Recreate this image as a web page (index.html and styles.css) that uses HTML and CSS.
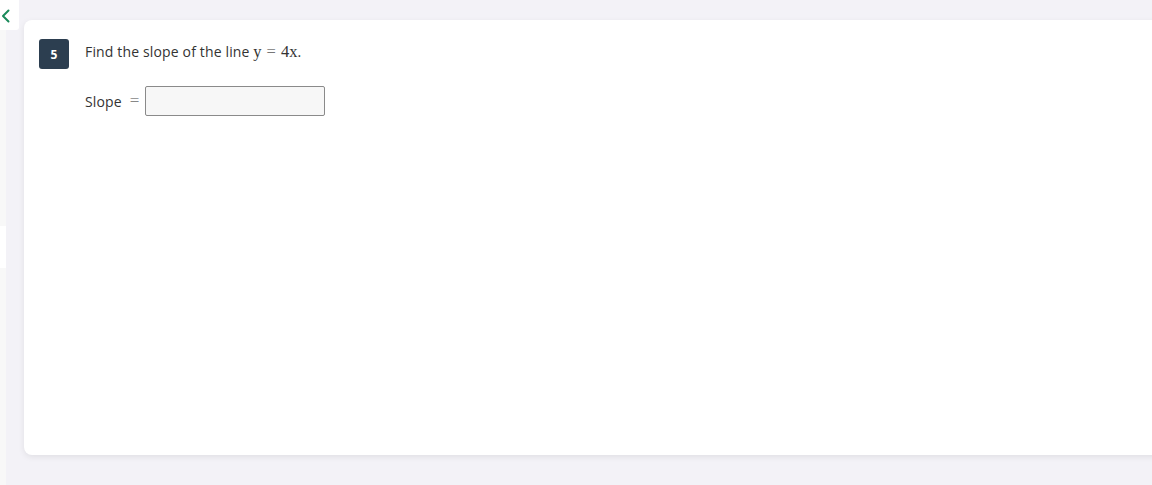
FILE: index.html
```html
<!DOCTYPE html>
<html lang="en">
<head>
    <meta charset="UTF-8">
    <meta name="viewport" content="width=device-width, initial-scale=1.0">
    <title>Question 5</title>
    <link rel="stylesheet" href="styles.css">
</head>
<body>
    <a class="back" href="#" aria-label="Back">
        <svg width="10" height="14" viewBox="0 0 10 14">
            <path d="M7.5 1.5 L2 7 L7.5 12.5" fill="none" stroke="#1a8a5a" stroke-width="2" stroke-linecap="round" stroke-linejoin="round"/>
        </svg>
    </a>
    <div class="layout">
        <aside class="side">
            <div class="side-block"></div>
        </aside>
        <main class="main">
            <div class="card">
                <div class="question">
                    <div class="badge">5</div>
                    <div class="body">
                        <p class="prompt">Find the slope of the line <span class="math">y<span class="op">=</span>4x</span>.</p>
                        <div class="answer">
                            <label for="slope">Slope</label>
                            <span class="eq">=</span>
                            <input type="text" id="slope">
                        </div>
                    </div>
                </div>
            </div>
        </main>
    </div>
</body>
</html>
```

FILE: styles.css
```css
/* Page */
html, body {
    margin: 0;
    padding: 0;
    height: 100%;
    overflow: hidden;
}

body {
    font-family: "Open Sans", "Noto Sans", sans-serif;
    background-color: #f3f2f7;
    color: #333;
}

.back {
    position: absolute;
    top: 0;
    left: 0;
    width: 19px;
    height: 30px;
    background-color: #fff;
    border-bottom-right-radius: 3px;
    display: flex;
    align-items: center;
    justify-content: flex-start;
    padding-left: 1px;
    padding-top: 2px;
    box-sizing: border-box;
}

.layout {
    display: flex;
    height: 100%;
}

.side {
    width: 6px;
    flex-shrink: 0;
    background-color: #f8f8f8;
    padding-top: 226px;
}

.side-block {
    height: 42px;
    background-color: #fff;
}

.main {
    flex: 1;
    padding: 20px 0 30px 18px;
    min-width: 0;
}

.card {
    background-color: #fff;
    border-radius: 8px 0 0 8px;
    box-shadow: 0 2px 6px rgba(0, 0, 0, 0.08);
    height: 435px;
    width: calc(100% + 20px);
    box-sizing: border-box;
    padding: 19px 15px;
}

.question {
    display: flex;
    gap: 16px;
}

.badge {
    width: 30px;
    height: 30px;
    flex-shrink: 0;
    background-color: #2c3e50;
    color: #fff;
    border-radius: 3px;
    font-weight: bold;
    font-size: 12px;
    display: flex;
    align-items: center;
    justify-content: center;
}

.prompt {
    margin: -2px 0 0;
    font-size: 14px;
    letter-spacing: 0.15px;
    line-height: 30px;
}

.math {
    font-family: "Liberation Serif", "DejaVu Serif", serif;
    font-size: 16.5px;
    letter-spacing: 0;
    color: #333;
}

.op {
    color: #777;
    padding: 0 5px;
}

.answer {
    display: flex;
    align-items: center;
    margin-top: 19px;
    font-size: 14px;
    letter-spacing: 0.15px;
}

.eq {
    font-family: "Liberation Serif", serif;
    color: #888;
    margin: 0 5px 0 8px;
    font-size: 17px;
}

input[type="text"] {
    width: 180px;
    height: 30px;
    box-sizing: border-box;
    border: 1px solid #8a8a8a;
    border-radius: 2px;
    background-color: #f7f7f7;
    margin: 0;
    padding: 0 6px;
}
```
